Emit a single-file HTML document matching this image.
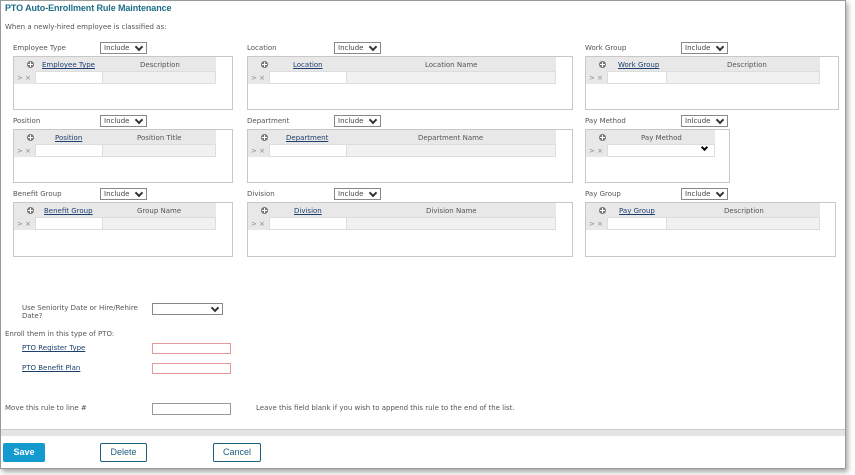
<!DOCTYPE html>
<html><head><meta charset="utf-8"><style>
*{box-sizing:border-box;margin:0;padding:0}
body{width:855px;height:475px;background:#fff;font-family:"DejaVu Sans","Liberation Sans",sans-serif;font-size:7px;color:#555;position:relative;overflow:hidden}
.a{position:absolute}
#frame{left:0;top:0;width:846px;height:469px;border:1px solid #999;box-shadow:2px 3px 5px rgba(0,0,0,.35);background:#fff}
.title{left:5px;top:3px;font-size:9px;color:#1d6d87;font-family:"Liberation Sans",sans-serif;font-weight:bold;letter-spacing:-.1px}
.lbl{color:#555;white-space:nowrap}
.sel{height:12px;border:1px solid #888;background:#fff;font-size:7px;color:#444;padding:1px 0 0 3px}
.sel:after{content:"";position:absolute;right:4px;top:1px;width:4px;height:4px;border-right:2px solid #333;border-bottom:2px solid #333;transform:rotate(45deg)}
.box{border:1px solid #c8c8c8;background:#fff}
.hdr{background:#e8e8e8;height:14px}
.row{background:#e8e8e8;height:13px}
.cell{background:#fff;border:1px solid #ddd;height:13px}
.dcell{background:#f1f1f1;border:1px solid #ddd;height:13px}
.u{color:#1d3f6e;text-decoration:underline;white-space:nowrap}
.plus{width:7px;height:7px;border-radius:50%;background:#777 linear-gradient(#fff,#fff) center/5px 1px no-repeat}
.plus:before{content:"";position:absolute;left:3px;top:1px;width:1px;height:5px;background:#fff}
.gl{color:#888;font-size:7px}
.inp{height:11px;border:1px solid #999;background:#fff}
.red{border-color:#e6999b}
.btn{height:19px;border:1px solid #1d5f7c;border-radius:2px;color:#1d5f7c;font-size:9px;text-align:center;line-height:17px;font-family:"Liberation Sans",sans-serif}
</style></head><body>
<div id="frame" class="a"></div>
<div class="a title">PTO Auto-Enrollment Rule Maintenance</div>
<div class="a lbl" style="left:5px;top:23px">When a newly-hired employee is classified as:</div>

<div class="a lbl" style="left:13px;top:44px">Employee Type</div>
<div class="a sel" style="left:100px;top:42px;width:47px">Include</div>
<div class="a box" style="left:13px;top:56px;width:220px;height:54px"></div>
<div class="a hdr" style="left:14px;top:57px;width:202px"></div>
<div class="a row" style="left:14px;top:71px;width:202px"></div>
<div class="a plus" style="left:27px;top:61px"></div>
<div class="a u" style="left:42px;top:61px">Employee Type</div>
<div class="a lbl" style="left:140px;top:61px">Description</div>
<div class="a gl" style="left:17px;top:74px">&gt; ×</div>
<div class="a cell" style="left:35px;top:71px;width:68px"></div>
<div class="a dcell" style="left:102px;top:71px;width:114px"></div>

<div class="a lbl" style="left:247px;top:44px">Location</div>
<div class="a sel" style="left:334px;top:42px;width:47px">Include</div>
<div class="a box" style="left:247px;top:56px;width:326px;height:54px"></div>
<div class="a hdr" style="left:248px;top:57px;width:308px"></div>
<div class="a row" style="left:248px;top:71px;width:308px"></div>
<div class="a plus" style="left:261px;top:61px"></div>
<div class="a u" style="left:293px;top:61px">Location</div>
<div class="a lbl" style="left:425px;top:61px">Location Name</div>
<div class="a gl" style="left:251px;top:74px">&gt; ×</div>
<div class="a cell" style="left:269px;top:71px;width:78px"></div>
<div class="a dcell" style="left:346px;top:71px;width:210px"></div>

<div class="a lbl" style="left:585px;top:44px">Work Group</div>
<div class="a sel" style="left:681px;top:42px;width:47px">Include</div>
<div class="a box" style="left:585px;top:56px;width:254px;height:54px"></div>
<div class="a hdr" style="left:586px;top:57px;width:234px"></div>
<div class="a row" style="left:586px;top:71px;width:234px"></div>
<div class="a plus" style="left:599px;top:61px"></div>
<div class="a u" style="left:618px;top:61px">Work Group</div>
<div class="a lbl" style="left:727px;top:61px">Description</div>
<div class="a gl" style="left:589px;top:74px">&gt; ×</div>
<div class="a cell" style="left:607px;top:71px;width:60px"></div>
<div class="a dcell" style="left:666px;top:71px;width:154px"></div>

<div class="a lbl" style="left:13px;top:117px">Position</div>
<div class="a sel" style="left:100px;top:115px;width:47px">Include</div>
<div class="a box" style="left:13px;top:129px;width:220px;height:54px"></div>
<div class="a hdr" style="left:14px;top:130px;width:202px"></div>
<div class="a row" style="left:14px;top:144px;width:202px"></div>
<div class="a plus" style="left:27px;top:134px"></div>
<div class="a u" style="left:55px;top:134px">Position</div>
<div class="a lbl" style="left:137px;top:134px">Position Title</div>
<div class="a gl" style="left:17px;top:147px">&gt; ×</div>
<div class="a cell" style="left:35px;top:144px;width:68px"></div>
<div class="a dcell" style="left:102px;top:144px;width:114px"></div>

<div class="a lbl" style="left:247px;top:117px">Department</div>
<div class="a sel" style="left:334px;top:115px;width:47px">Include</div>
<div class="a box" style="left:247px;top:129px;width:326px;height:54px"></div>
<div class="a hdr" style="left:248px;top:130px;width:308px"></div>
<div class="a row" style="left:248px;top:144px;width:308px"></div>
<div class="a plus" style="left:261px;top:134px"></div>
<div class="a u" style="left:286px;top:134px">Department</div>
<div class="a lbl" style="left:418px;top:134px">Department Name</div>
<div class="a gl" style="left:251px;top:147px">&gt; ×</div>
<div class="a cell" style="left:269px;top:144px;width:78px"></div>
<div class="a dcell" style="left:346px;top:144px;width:210px"></div>

<div class="a lbl" style="left:585px;top:117px">Pay Method</div>
<div class="a sel" style="left:681px;top:115px;width:47px">Inlcude</div>
<div class="a box" style="left:585px;top:129px;width:145px;height:54px"></div>
<div class="a hdr" style="left:586px;top:130px;width:129px"></div>
<div class="a row" style="left:586px;top:144px;width:129px"></div>
<div class="a plus" style="left:599px;top:134px"></div>
<div class="a lbl" style="left:641px;top:134px">Pay Method</div>
<div class="a gl" style="left:589px;top:147px">&gt; ×</div>
<div class="a cell" style="left:607px;top:144px;width:108px"></div>
<div class="a" style="left:702px;top:145px;width:5px;height:5px;border-right:2px solid #000;border-bottom:2px solid #000;transform:rotate(45deg)"></div>

<div class="a lbl" style="left:13px;top:190px">Benefit Group</div>
<div class="a sel" style="left:100px;top:188px;width:47px">Include</div>
<div class="a box" style="left:13px;top:202px;width:220px;height:55px"></div>
<div class="a hdr" style="left:14px;top:203px;width:202px"></div>
<div class="a row" style="left:14px;top:217px;width:202px"></div>
<div class="a plus" style="left:27px;top:207px"></div>
<div class="a u" style="left:44px;top:207px">Benefit Group</div>
<div class="a lbl" style="left:137px;top:207px">Group Name</div>
<div class="a gl" style="left:17px;top:220px">&gt; ×</div>
<div class="a cell" style="left:35px;top:217px;width:68px"></div>
<div class="a dcell" style="left:102px;top:217px;width:114px"></div>

<div class="a lbl" style="left:247px;top:190px">Division</div>
<div class="a sel" style="left:334px;top:188px;width:47px">Include</div>
<div class="a box" style="left:247px;top:202px;width:326px;height:55px"></div>
<div class="a hdr" style="left:248px;top:203px;width:308px"></div>
<div class="a row" style="left:248px;top:217px;width:308px"></div>
<div class="a plus" style="left:261px;top:207px"></div>
<div class="a u" style="left:294px;top:207px">Division</div>
<div class="a lbl" style="left:426px;top:207px">Division Name</div>
<div class="a gl" style="left:251px;top:220px">&gt; ×</div>
<div class="a cell" style="left:269px;top:217px;width:78px"></div>
<div class="a dcell" style="left:346px;top:217px;width:210px"></div>

<div class="a lbl" style="left:585px;top:190px">Pay Group</div>
<div class="a sel" style="left:681px;top:188px;width:47px">Include</div>
<div class="a box" style="left:585px;top:202px;width:251px;height:55px"></div>
<div class="a hdr" style="left:586px;top:203px;width:234px"></div>
<div class="a row" style="left:586px;top:217px;width:234px"></div>
<div class="a plus" style="left:599px;top:207px"></div>
<div class="a u" style="left:619px;top:207px">Pay Group</div>
<div class="a lbl" style="left:724px;top:207px">Description</div>
<div class="a gl" style="left:589px;top:220px">&gt; ×</div>
<div class="a cell" style="left:607px;top:217px;width:60px"></div>
<div class="a dcell" style="left:666px;top:217px;width:154px"></div>

<div class="a lbl" style="left:22px;top:304px;line-height:8px">Use Seniority Date or Hire/Rehire<br>Date?</div>
<div class="a sel" style="left:152px;top:303px;width:71px"></div>
<div class="a lbl" style="left:5px;top:330px">Enroll them in this type of PTO:</div>
<div class="a u" style="left:22px;top:344px">PTO Register Type</div>
<div class="a inp red" style="left:152px;top:343px;width:79px"></div>
<div class="a u" style="left:22px;top:364px">PTO Benefit Plan</div>
<div class="a inp red" style="left:152px;top:363px;width:79px"></div>
<div class="a lbl" style="left:5px;top:404px">Move this rule to line #</div>
<div class="a inp" style="left:152px;top:403px;width:79px;height:12px"></div>
<div class="a lbl" style="left:256px;top:404px">Leave this field blank if you wish to append this rule to the end of the list.</div>

<div class="a" style="left:1px;top:429px;width:844px;height:7px;background:#e4e4e4;border-top:1px solid #ccc"></div>
<div class="a btn" style="left:3px;top:443px;width:42px;background:#139bd0;border-color:#139bd0;color:#fff;font-weight:bold">Save</div>
<div class="a btn" style="left:100px;top:443px;width:47px">Delete</div>
<div class="a btn" style="left:213px;top:443px;width:48px">Cancel</div>
</body></html>
